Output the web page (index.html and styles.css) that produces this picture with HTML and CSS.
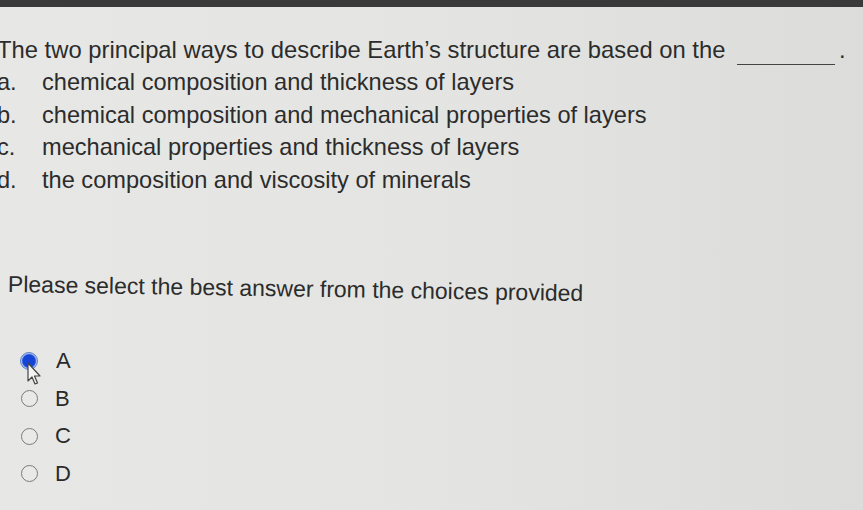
FILE: index.html
```
<!DOCTYPE html>
<html>
<head>
<meta charset="utf-8">
<link rel="stylesheet" href="styles.css">
</head>
<body>
<div class="topbar"></div>
<main class="page">
  <section class="question">
    <p class="stem">The two principal ways to describe Earth’s structure are based on the <span class="blank"></span>.</p>
    <ol class="options">
      <li><span class="letter">a.</span><span>chemical composition and thickness of layers</span></li>
      <li><span class="letter">b.</span><span>chemical composition and mechanical properties of layers</span></li>
      <li><span class="letter">c.</span><span>mechanical properties and thickness of layers</span></li>
      <li><span class="letter">d.</span><span>the composition and viscosity of minerals</span></li>
    </ol>
  </section>
  <p class="prompt">Please select the best answer from the choices provided</p>
  <div class="choices">
    <label class="choice"><span class="radio checked"></span><span class="label">A</span>
      <svg class="cursor" width="16" height="24" viewBox="0 0 16 24"><path d="M1 1 L1 19 L5 15 L8 22 L10.5 21 L7.5 14 L13 14 Z" fill="#f4f4f4" stroke="#444" stroke-width="1.2" stroke-linejoin="round"/></svg>
    </label>
    <label class="choice"><span class="radio"></span><span class="label">B</span></label>
    <label class="choice"><span class="radio"></span><span class="label">C</span></label>
    <label class="choice"><span class="radio"></span><span class="label">D</span></label>
  </div>
</main>
</body>
</html>
```
FILE: styles.css
```
html, body {
  margin: 0;
  padding: 0;
}
body {
  width: 863px;
  height: 510px;
  overflow: hidden;
  background: linear-gradient(90deg, #e7e8e6 0%, #e4e5e3 50%, #dcdddb 100%);
  font-family: "Liberation Sans", Arial, sans-serif;
  color: #2c2c2c;
}
.topbar {
  height: 7px;
  background: #3a3a3a;
}
.question {
  margin-left: -3px;
}
.stem {
  margin: 27px 0 0 0;
  font-size: 23.8px;
  line-height: 32px;
}
.blank {
  display: inline-block;
  width: 98px;
  border-bottom: 1px solid #444;
  margin-left: 5px;
  margin-right: 4px;
  vertical-align: -7px;
}
.options {
  list-style: none;
  margin: 0;
  padding: 0;
}
.options li {
  display: flex;
  font-size: 23.6px;
  line-height: 32.5px;
}
.letter {
  width: 45px;
}
.prompt {
  margin: 72px 0 0 8px;
  font-size: 23px;
  line-height: 32px;
  transform: rotate(0.9deg);
  transform-origin: left center;
}
.choices {
  margin: 51px 0 0 21px;
  display: flex;
  flex-direction: column;
  gap: 17.5px;
}
.choice {
  position: relative;
  display: flex;
  align-items: center;
  gap: 17px;
  height: 20px;
  font-size: 22px;
}
.radio {
  width: 17px;
  height: 17px;
  border: 1.6px solid #7a7a7a;
  border-radius: 50%;
  box-sizing: border-box;
  background: #e9e9e8;
}
.radio.checked {
  width: 18px;
  height: 18px;
  border: 1px solid #5d7fc9;
  background: radial-gradient(circle, #1544d6 0 52%, #3a66de 58%, #a9c3ee 66%);
  margin-left: -1px;
  margin-right: 1px;
}
.label {
  color: #2a2a2a;
}
.cursor {
  position: absolute;
  left: 6px;
  top: 11px;
}
```
